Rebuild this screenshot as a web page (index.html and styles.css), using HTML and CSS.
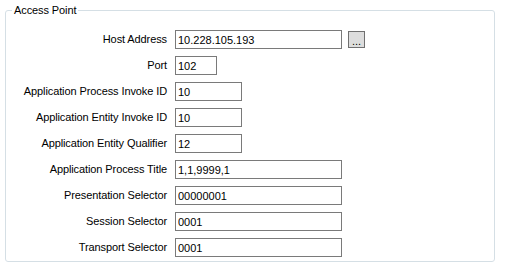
FILE: index.html
```html
<!DOCTYPE html>
<html lang="en">
<head>
<meta charset="UTF-8">
<title>Access Point</title>
<link rel="stylesheet" href="styles.css">
</head>
<body>
  <fieldset class="group">
    <legend class="group-title">Access Point</legend>
    <div class="form">
      <label class="label">Host Address</label>
      <div class="field">
        <input class="text long" type="text" value="10.228.105.193">
        <button class="browse" type="button">...</button>
      </div>

      <label class="label">Port</label>
      <div class="field"><input class="text short" type="text" value="102"></div>

      <label class="label">Application Process Invoke ID</label>
      <div class="field"><input class="text medium" type="text" value="10"></div>

      <label class="label">Application Entity Invoke ID</label>
      <div class="field"><input class="text medium" type="text" value="10"></div>

      <label class="label">Application Entity Qualifier</label>
      <div class="field"><input class="text medium" type="text" value="12"></div>

      <label class="label">Application Process Title</label>
      <div class="field"><input class="text long" type="text" value="1,1,9999,1"></div>

      <label class="label">Presentation Selector</label>
      <div class="field"><input class="text long" type="text" value="00000001"></div>

      <label class="label">Session Selector</label>
      <div class="field"><input class="text long" type="text" value="0001"></div>

      <label class="label">Transport Selector</label>
      <div class="field"><input class="text long" type="text" value="0001"></div>
    </div>
  </fieldset>
</body>
</html>
```

FILE: styles.css
```css
body {
  margin: 0;
  padding: 4px 13px 0 5px;
  background: #ffffff;
  font-family: "Liberation Sans", Arial, sans-serif;
  font-size: 11px;
  color: #000000;
}

/* group box */
.group {
  margin: 0;
  padding: 0;
  border: 1px solid #d5dfe5;
  border-radius: 3px;
}

.group-title {
  margin-left: 6px;
  padding: 0 2px;
  line-height: 13px;
  letter-spacing: -0.1px;
}

/* label / input rows */
.form {
  display: grid;
  grid-template-columns: 161px auto;
  column-gap: 8px;
  row-gap: 7px;
  align-items: center;
  padding: 13px 0 4px 0;
}

.label {
  text-align: right;
  line-height: 13px;
  letter-spacing: -0.1px;
}

.field {
  display: flex;
  align-items: center;
}

.text {
  box-sizing: border-box;
  height: 19px;
  margin: 0;
  padding: 0 2px;
  border: 1px solid #7a7a7a;
  font-family: inherit;
  font-size: 11px;
  color: #000000;
  outline: none;
}

.short { width: 42px; }
.medium { width: 67px; }
.long { width: 167px; }

.browse {
  box-sizing: border-box;
  width: 17px;
  height: 17px;
  margin-left: 6px;
  padding: 4px 0 0 0;
  border: 1px solid #707070;
  background: #dddddd;
  font-family: inherit;
  font-size: 11px;
  line-height: 11px;
  color: #000000;
}
```
